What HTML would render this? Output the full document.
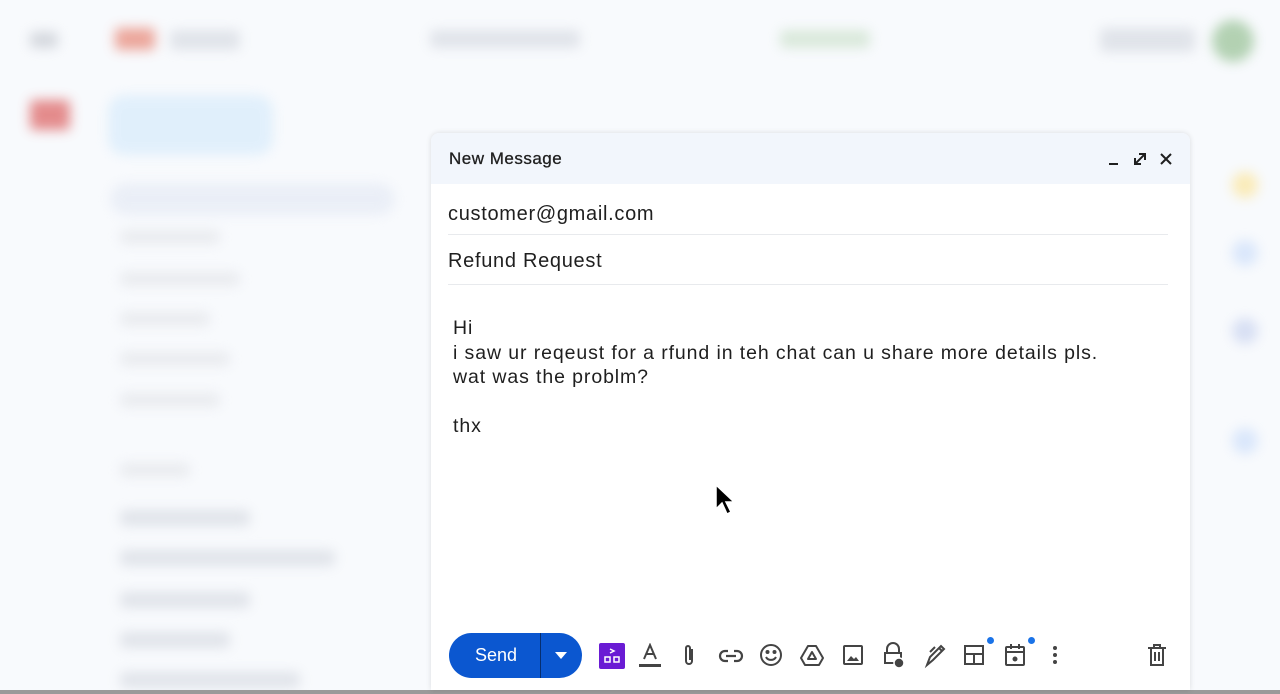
<!DOCTYPE html>
<html><head><meta charset="utf-8"><style>
*{margin:0;padding:0;box-sizing:border-box}
body{width:1280px;height:694px;overflow:hidden;background:#f8fafd;font-family:"Liberation Sans",Arial,sans-serif;position:relative}
.bg{position:absolute;inset:0;filter:blur(6px);opacity:.75}
.b{position:absolute;background:#d8dce3;border-radius:4px}
.compose{position:absolute;left:431px;top:133px;width:759px;height:557px;background:#fff;box-shadow:0 0 6px rgba(0,0,0,.12);border-radius:8px 8px 0 0;overflow:hidden}
.hdr{height:51px;background:#f2f6fc;display:flex;align-items:center;padding-left:18px;font-size:17px;color:#1f1f1f;letter-spacing:.5px;-webkit-text-stroke:.3px #1f1f1f}
.field{position:absolute;left:17px;right:22px;font-size:20px;color:#1f1f1f;border-bottom:1.5px solid #e8eaed;letter-spacing:.7px;padding-top:2px}
.body{position:absolute;left:22px;top:183px;font-size:19.5px;line-height:24.5px;color:#1f1f1f;letter-spacing:.9px}
.tb{position:absolute;top:500px;left:0;right:0;height:45px}
.send{position:absolute;left:18px;top:0;width:133px;height:45px;background:#0b57d0;border-radius:23px;color:#fff;font-size:18px}
.ic{position:absolute;top:10px}
</style></head><body>
<div class="bg">
<div class="b" style="left:30px;top:32px;width:28px;height:16px;background:#c8ccd3"></div>
<div class="b" style="left:115px;top:28px;width:40px;height:22px;background:#e88a7a"></div>
<div class="b" style="left:170px;top:30px;width:70px;height:20px"></div>
<div class="b" style="left:30px;top:100px;width:40px;height:30px;background:#d66"></div>
<div class="b" style="left:108px;top:95px;width:165px;height:60px;background:#d9ecfb;border-radius:16px"></div>
<div class="b" style="left:110px;top:183px;width:285px;height:32px;background:#e6ebf5;border-radius:16px"></div>
<div class="b" style="left:430px;top:30px;width:150px;height:18px"></div>
<div class="b" style="left:780px;top:30px;width:90px;height:18px;background:#cfe3cf"></div>
<div class="b" style="left:1100px;top:28px;width:95px;height:24px"></div>
<div class="b" style="left:1212px;top:20px;width:42px;height:42px;border-radius:50%;background:#9cc49a"></div>
<div class="b" style="left:1232px;top:172px;width:26px;height:26px;border-radius:50%;background:#fbe6a0"></div>
<div class="b" style="left:1232px;top:240px;width:26px;height:26px;border-radius:50%;background:#cfe0fa"></div>
<div class="b" style="left:1232px;top:318px;width:26px;height:26px;border-radius:50%;background:#ccd6f0"></div>
<div class="b" style="left:1232px;top:428px;width:26px;height:26px;border-radius:50%;background:#cfe0fa"></div>
<div class="b" style="left:120px;top:230px;width:100px;height:14px;background:#e4e6ea"></div>
<div class="b" style="left:120px;top:272px;width:120px;height:14px;background:#e4e6ea"></div>
<div class="b" style="left:120px;top:312px;width:90px;height:14px;background:#e4e6ea"></div>
<div class="b" style="left:120px;top:352px;width:110px;height:14px;background:#e4e6ea"></div>
<div class="b" style="left:120px;top:393px;width:100px;height:14px;background:#e4e6ea"></div>
<div class="b" style="left:120px;top:463px;width:70px;height:14px;background:#e4e6ea"></div>
<div class="b" style="left:120px;top:510px;width:130px;height:16px"></div>
<div class="b" style="left:120px;top:550px;width:215px;height:16px"></div>
<div class="b" style="left:120px;top:592px;width:130px;height:16px"></div>
<div class="b" style="left:120px;top:632px;width:110px;height:16px"></div>
<div class="b" style="left:120px;top:672px;width:180px;height:16px"></div>
</div>
<div style="position:absolute;left:0;right:0;top:690px;height:4px;background:#9a9a9a"></div>
<div class="compose">
<div class="hdr">New Message
<svg style="position:absolute;left:676px;top:18px" width="70" height="16" viewBox="0 0 70 16" fill="none" stroke="#1f1f1f" stroke-width="2"><path d="M2 13h9"/><path d="M28 13l10-10M32 3h6v6M28 7v6h6" /><path d="M54 3l10 10M64 3l-10 10"/></svg>
</div>
<div class="field" style="top:68px;height:34px">customer@gmail.com</div>
<div class="field" style="top:115px;height:37px">Refund Request</div>
<div class="body">Hi<br>i saw ur reqeust for a rfund in teh chat can u share more details pls.<br>wat was the problm?<br><br>thx</div>
<svg style="position:absolute;left:284px;top:351px" width="22" height="34" viewBox="0 0 22 34"><path d="M1 1v24l6-6 5 11 4-2-5-10h8z" fill="#000" stroke="#fff" stroke-width="1.5"/></svg>
<div class="tb">
<div class="send"><span style="position:absolute;left:26px;top:12px">Send</span><div style="position:absolute;left:91px;top:0;width:1px;height:45px;background:#062e6f"></div><svg style="position:absolute;left:106px;top:19px" width="12" height="7"><path d="M0 0h12L6 7z" fill="#fff"/></svg></div>
<svg class="ic" style="left:168px;top:10px" width="26" height="26"><rect width="26" height="26" rx="2" fill="#6a1bd4"/><rect x="6" y="14" width="5" height="5" fill="none" stroke="#fff" stroke-width="1.5"/><rect x="15" y="14" width="5" height="5" fill="none" stroke="#fff" stroke-width="1.5"/><path d="M11 6l4 2-4 2" stroke="#fff" fill="none" stroke-width="1.5"/></svg>
<svg class="ic" style="left:207px" width="24" height="26" fill="none" stroke="#444" stroke-width="2"><path d="M6 16l6-14 6 14M8 11h8"/><rect x="1" y="21" width="22" height="3" fill="#444" stroke="none"/></svg>
<svg class="ic" style="left:249px" width="18" height="26" fill="none" stroke="#444" stroke-width="2"><path d="M12 6v12a3 3 0 0 1-6 0V5a2 2 0 0 1 4 0v12"/></svg>
<svg class="ic" style="left:287px;top:13px" width="26" height="20" fill="none" stroke="#444" stroke-width="2.2"><path d="M10 5H7a5 5 0 0 0 0 10h3M16 5h3a5 5 0 0 1 0 10h-3M8 10h10"/></svg>
<svg class="ic" style="left:328px" width="24" height="26" fill="none" stroke="#444" stroke-width="2"><circle cx="12" cy="12" r="10"/><circle cx="8.5" cy="9" r="1" fill="#444"/><circle cx="15.5" cy="9" r="1" fill="#444"/><path d="M7 14a5.5 5 0 0 0 10 0"/></svg>
<svg class="ic" style="left:369px" width="24" height="26" fill="none" stroke="#444" stroke-width="2" stroke-linejoin="round"><path d="M8 3h8l7 12-4 7H5l-4-7z"/><path d="M12 9l-4 7h8z"/></svg>
<svg class="ic" style="left:411px" width="22" height="26" fill="none" stroke="#444" stroke-width="2"><rect x="2" y="3" width="18" height="18" rx="1"/><path d="M5 18l4-5 3 3 2-2 3 4z" fill="#444" stroke="none"/></svg>
<svg class="ic" style="left:451px;top:8px" width="24" height="30" fill="none" stroke="#444" stroke-width="2"><path d="M5 12V8a6 6 0 0 1 12 0v4M3 12h16v10H3z"/><circle cx="17" cy="22" r="5" fill="#444" stroke="#fff" stroke-width="1.5"/></svg>
<svg class="ic" style="left:492px" width="24" height="26" fill="none" stroke="#444" stroke-width="2"><path d="M4 22l3-8 11-11 3 3-11 11zM16 5l3 3M12 4l-5 5"/></svg>
<svg class="ic" style="left:532px" width="22" height="26" fill="none" stroke="#444" stroke-width="2"><rect x="2" y="3" width="18" height="18"/><path d="M2 11h18M11 11v10"/></svg>
<div style="position:absolute;left:556px;top:4px;width:7px;height:7px;border-radius:50%;background:#1a73e8"></div>
<svg class="ic" style="left:573px" width="22" height="26" fill="none" stroke="#444" stroke-width="2"><rect x="2" y="4" width="18" height="18" rx="1"/><path d="M2 9h18M7 1v5M15 1v5"/><circle cx="11" cy="16" r="1.5" fill="#444"/></svg>
<div style="position:absolute;left:597px;top:4px;width:7px;height:7px;border-radius:50%;background:#1a73e8"></div>
<svg class="ic" style="left:620px" width="8" height="26" fill="#444"><circle cx="4" cy="5" r="2"/><circle cx="4" cy="12" r="2"/><circle cx="4" cy="19" r="2"/></svg>
<svg class="ic" style="left:716px" width="20" height="26" fill="none" stroke="#444" stroke-width="2"><path d="M1 5h18M7 5V2h6v3M4 5v17h12V5M8 9v9M12 9v9"/></svg>
</div>
</div>
</body></html>
